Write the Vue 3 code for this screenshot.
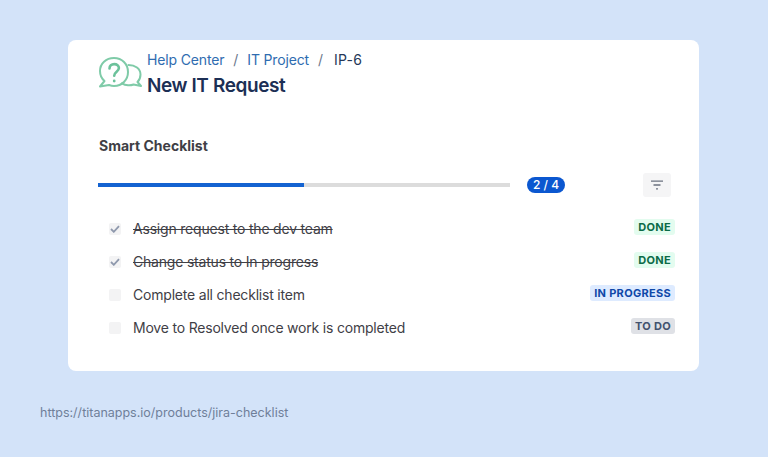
<template>
  <div class="page">
    <section class="card">
      <header class="head">
        <svg class="logo" width="44" height="34" viewBox="0 0 44 34" fill="none" stroke="#7fcba8" stroke-width="2" stroke-linejoin="round" stroke-linecap="round">
          <path d="M16 2C8 2 2 7.500 2 15c0 4 1.500 7.500 4.500 10L2 30.500l9-1.500c1.600.6 3.200 1 5 1 8 0 14-6 14-14S24 2 16 2z" />
          <path d="M30.500 9C37 9 42.500 12.500 42.500 18.500c0 3-1 5.500-3 7.500l3.500 4-7.500-1.500c-2 .8-3.500 1-5.500.8-2.500-.2-4.500-1-6-2" />
          <path d="M11.500 12.500c0-2.700 2-4.400 4.700-4.400 2.700 0 4.700 1.700 4.700 4 0 3.700-4.700 3.700-4.700 7.700" stroke-width="2.600" stroke="#6cc29b" />
          <circle cx="16.200" cy="25" r="1.400" fill="#6cc29b" stroke="none" />
        </svg>
        <div>
          <nav class="crumbs">
            <a>Help Center</a><span class="sep">/</span><a>IT Project</a><span class="sep">/</span><span class="cur">IP-6</span>
          </nav>
          <h1>New IT Request</h1>
        </div>
      </header>

      <h2>Smart Checklist</h2>

      <div class="progress-row">
        <div class="track"><div class="fill" :style="{ width: percent + '%' }"></div></div>
        <span class="count">{{ doneCount }} / {{ items.length }}</span>
        <button class="filter" type="button">
          <svg width="12" height="10" viewBox="0 0 12 10" fill="none" stroke="#6b7280" stroke-width="1.300">
            <path d="M0 1.200h12M2.500 5h7M5 8.800h2" />
          </svg>
        </button>
      </div>

      <ul class="list">
        <li v-for="item in items" :key="item.text">
          <span class="box">
            <svg v-if="item.status === 'done'" width="10" height="8" viewBox="0 0 10 8" fill="none" stroke="#8f99ad" stroke-width="1.800">
              <path d="M1 4l2.800 2.800L9 1.200" />
            </svg>
          </span>
          <span class="text" :class="{ struck: item.status === 'done' }">{{ item.text }}</span>
          <span class="tag" :class="item.status">{{ labels[item.status] }}</span>
        </li>
      </ul>
    </section>
    <p class="source">https://titanapps.io/products/jira-checklist</p>
  </div>
</template>

<script setup>
import { computed } from 'vue'

const labels = { done: 'DONE', progress: 'IN PROGRESS', todo: 'TO DO' }

const items = [
  { text: 'Assign request to the dev team', status: 'done' },
  { text: 'Change status to In progress', status: 'done' },
  { text: 'Complete all checklist item', status: 'progress' },
  { text: 'Move to Resolved once work is completed', status: 'todo' }
]

const doneCount = computed(() => items.filter((i) => i.status === 'done').length)
const percent = computed(() => (doneCount.value / items.length) * 100)
</script>

<style>
html,
body {
  margin: 0;
  background: #d3e3f9;
}
</style>

<style scoped>
.page {
  height: 457px;
  box-sizing: border-box;
  padding: 40px 69px 0 68px;
  font-family: Inter, "Liberation Sans", sans-serif;
  overflow: hidden;
}

.card {
  height: 331px;
  box-sizing: border-box;
  background: #fff;
  border-radius: 8px;
  padding: 11px 24px 0 30px;
}

.head {
  display: flex;
  align-items: flex-start;
  gap: 5px;
}

.logo {
  margin-top: 5px;
}

.crumbs {
  font-size: 14px;
  line-height: 18px;
  letter-spacing: -0.15px;
  color: #2f6cb0;
}

.sep {
  color: #6b778c;
  margin: 0 9px;
}

.cur {
  margin-left: 2px;
  letter-spacing: 0.3px;
  color: #253858;
}

h1 {
  margin: 4px 0 0;
  font-size: 19px;
  line-height: 26px;
  font-weight: 600;
  letter-spacing: -0.4px;
  color: #1c2f55;
}

h2 {
  margin: 38px 0 0 1px;
  font-size: 14px;
  line-height: 18px;
  font-weight: 700;
  color: #3f3f46;
}

.progress-row {
  display: flex;
  align-items: center;
  margin-top: 18px;
}

.track {
  width: 412px;
  height: 4px;
  background: #dcdcdc;
}

.fill {
  height: 100%;
  background: #1463d1;
}

.count {
  margin-left: 17px;
  width: 38px;
  height: 16px;
  line-height: 16px;
  border-radius: 8px;
  background: #0b57d0;
  color: #fff;
  font-size: 12px;
  font-weight: 500;
  text-align: center;
}

.filter {
  margin-left: 78px;
  width: 28px;
  height: 24px;
  padding: 0;
  border: 0;
  border-radius: 3px;
  background: #f5f5f6;
  display: flex;
  align-items: center;
  justify-content: center;
}

.list {
  list-style: none;
  margin: 15px 0 0;
  padding: 0 0 0 11px;
}

.list li {
  display: flex;
  align-items: center;
  height: 33px;
  color: #3f4046;
  font-size: 14px;
  letter-spacing: -0.2px;
}

.box {
  width: 12px;
  height: 12px;
  border-radius: 2px;
  background: #f3f3f4;
  display: flex;
  align-items: center;
  justify-content: center;
  margin-right: 12px;
}

.text {
  flex: 1;
}

.struck {
  text-decoration: line-through;
}

.tag {
  font-size: 11px;
  line-height: 16px;
  font-weight: 700;
  letter-spacing: 0.3px;
  padding: 0 4px;
  border-radius: 3px;
  position: relative;
  top: -2px;
}

.tag.done {
  background: #e3fcef;
  color: #0b6b47;
}

.tag.progress {
  background: #deebff;
  color: #0f48a8;
}

.tag.todo {
  background: #dfe1e6;
  color: #42526e;
}

.source {
  margin: 34px 0 0 -28px;
  font-size: 12.500px;
  line-height: 16px;
  color: #6f7f99;
}
</style>
